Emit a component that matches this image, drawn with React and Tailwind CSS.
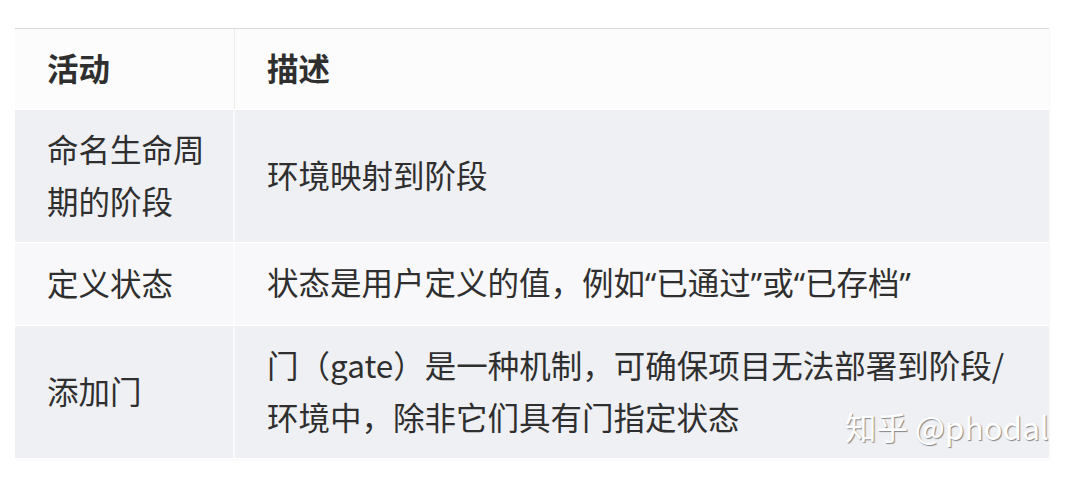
import React from 'react';

const Q = ({ children }) => (
  <span style={{ fontFamily: '"Noto Sans", sans-serif' }}>{children}</span>
);

const rows = [
  { activity: ['命名生命周', '期的阶段'], desc: ['环境映射到阶段'], bg: 'bg-[#eef0f3]' },
  {
    activity: ['定义状态'],
    desc: [
      <>
        状态是用户定义的值，例如<Q>“</Q>已通过<Q>”</Q>或<Q>“</Q>已存档<Q>”</Q>
      </>
    ],
    bg: 'bg-[#f8f8fa]'
  },
  {
    activity: ['添加门'],
    desc: ['门（gate）是一种机制，可确保项目无法部署到阶段/', '环境中，除非它们具有门指定状态'],
    bg: 'bg-[#eef0f3]'
  }
];

const Lines = ({ lines }) => (
  <>
    {lines.map((line, i) => (
      <div key={i} className="whitespace-nowrap">{line}</div>
    ))}
  </>
);

export default function App() {
  return (
    <div
      className="w-[1080px] h-[479px] bg-white pt-[28px] pl-[15px] text-[#2f2f2f]"
      style={{ fontFamily: '"Noto Sans CJK SC", "Noto Sans", sans-serif' }}
    >
      <div className="relative w-[1034px] border-t border-[#d9d9d9] shadow-[1px_1px_2px_rgba(0,0,0,0.04)]">
        {/* Header */}
        <div className="flex h-[81px] bg-[#fcfcfc] border-b border-white">
          <div className="w-[220px] flex items-center pl-[32px] pb-[3px] border-r border-[#ececec] text-[31.5px] font-bold">
            活动
          </div>
          <div className="flex-1 flex items-center pl-[32px] pb-[3px] text-[31.5px] font-bold">
            描述
          </div>
        </div>

        {/* Body */}
        {rows.map((row, i) => (
          <div key={i} className={`flex ${row.bg} border-b border-white last:border-b-0`}>
            <div className="w-[220px] flex items-center pl-[32px] pt-[12px] pb-[16px] border-r-2 border-white/60 text-[31.5px] leading-[52px]">
              <div>
                <Lines lines={row.activity} />
              </div>
            </div>
            <div className="flex-1 flex items-center pl-[32px] pt-[12px] pb-[16px] text-[31.5px] leading-[52px]">
              <div>
                <Lines lines={row.desc} />
              </div>
            </div>
          </div>
        ))}

        {/* Watermark */}
        <div className="absolute left-[830px] top-[377px] text-[31.5px] leading-[40px] text-white whitespace-nowrap [text-shadow:1px_1px_1px_rgba(0,0,0,0.45)]">
          知乎 @phodal
        </div>
      </div>
    </div>
  );
}
